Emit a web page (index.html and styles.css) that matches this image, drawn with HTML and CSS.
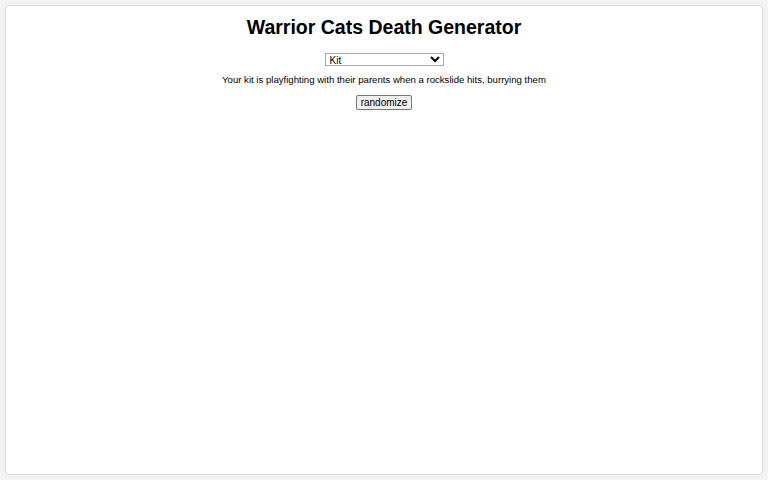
FILE: index.html
```html
<!DOCTYPE html>
<html lang="en">
<head>
    <meta charset="UTF-8">
    <meta name="viewport" content="width=device-width, initial-scale=1.0">
    <title>Warrior Cats Death Generator</title>
    <link rel="stylesheet" href="styles.css">
</head>
<body>
    <div class="container">
        <h1>Warrior Cats Death Generator</h1>
        <select class="rank" id="rank">
            <option>Kit</option>
            <option>Apprentice</option>
            <option>Warrior</option>
            <option>Medicine Cat</option>
            <option>Deputy</option>
            <option>Leader</option>
            <option>Elder</option>
        </select>
        <p class="result" id="result">Your kit is playfighting with their parents when a rockslide hits, burrying them</p>
        <button class="randomize" id="randomize">randomize</button>
    </div>
</body>
</html>
```

FILE: styles.css
```css
body {
    font-family: "Liberation Sans", Arial, sans-serif;
    margin: 0;
    padding: 5px;
    height: 100vh;
    box-sizing: border-box;
    background-color: #f3f3f3;
}

.container {
    background: #fff;
    height: 100%;
    box-sizing: border-box;
    border: 1px solid #dcdcdc;
    border-radius: 2px;
    text-align: center;
    padding-top: 10px;
}

h1 {
    font-size: 19.5px;
    line-height: 22px;
    margin: 0 0 15px;
}

.rank {
    font-family: "Liberation Sans", Arial, sans-serif;
    font-size: 10px;
    width: 119px;
    height: 13px;
    padding: 0;
    border: 1px solid #a9a9a9;
    background: #fff;
    display: block;
    margin: 0 auto;
}

.result {
    font-size: 9.6px;
    line-height: 12px;
    margin: 8px 0 6px;
}

.randomize {
    font-family: "Liberation Sans", Arial, sans-serif;
    font-size: 10px;
    height: 15px;
    padding: 0 4px;
    border: 1px solid #767676;
    border-radius: 2px;
    background: #efefef;
}
```
